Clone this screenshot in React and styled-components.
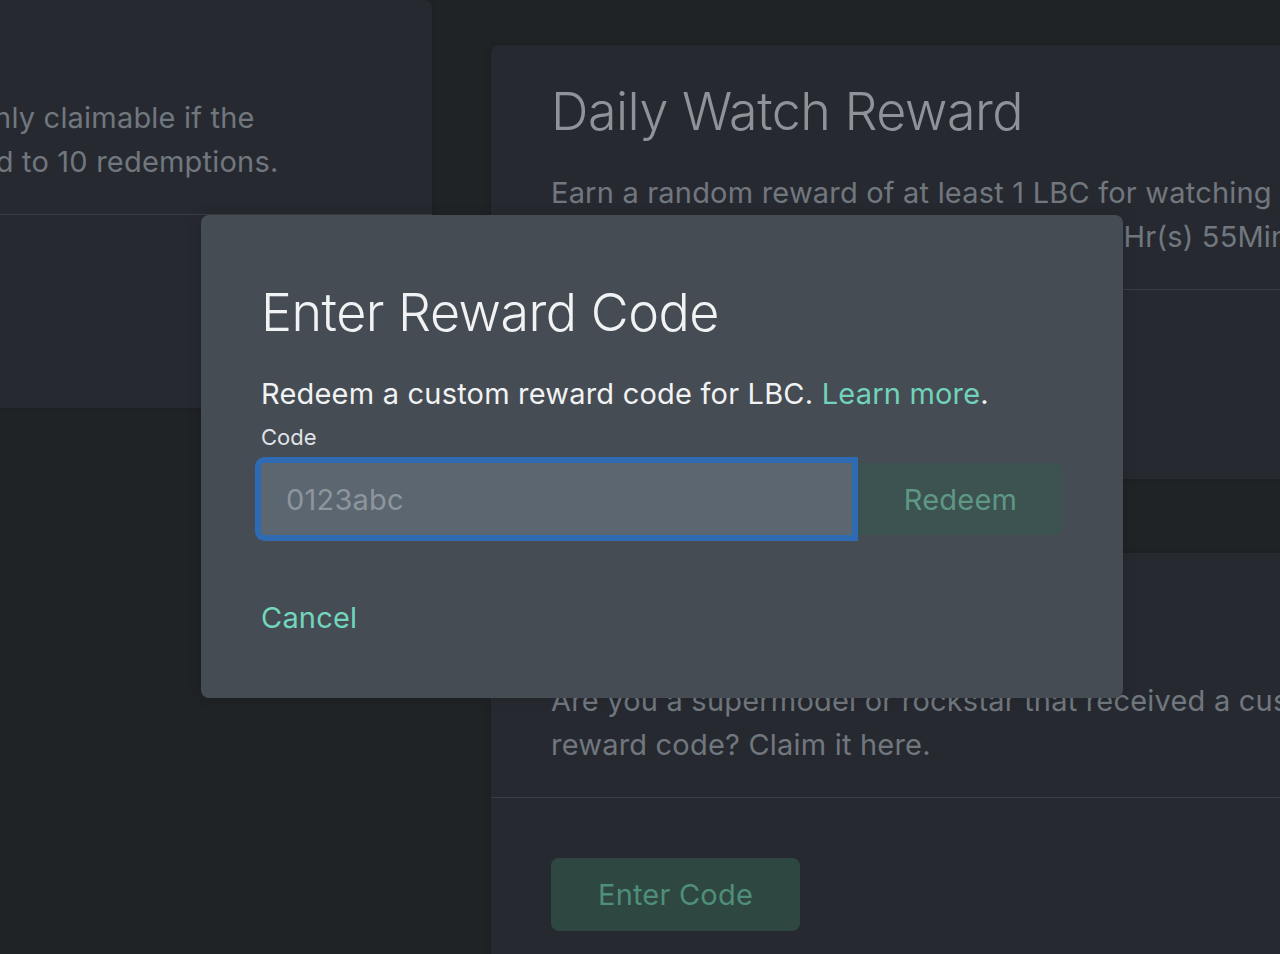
import styled, { createGlobalStyle } from 'styled-components';

const GlobalStyle = createGlobalStyle`
  html, body {
    margin: 0;
    padding: 0;
    background: #202326;
    font-family: Inter, "Noto Sans", sans-serif;
    overflow: hidden;
  }
`;

function App() {
  return (
    <>
      <GlobalStyle />
      <Page>
        <Columns>
          <LeftColumn>
            <Card>
              <Body $top={96}>
                <Description>
                  Rewards are only claimable if the<br />
                  but so is limited to 10 redemptions.
                </Description>
              </Body>
              <Divider />
              <Actions $bottom={60}>
                <GhostButton>Claim</GhostButton>
              </Actions>
            </Card>
          </LeftColumn>

          <RightColumn>
            <Card>
              <Body>
                <CardTitle>Daily Watch Reward</CardTitle>
                <Description>
                  Earn a random reward of at least 1 LBC for watching a cool video<br />
                  a cool video every day. Come back in 23 Hr(s) 55Min
                </Description>
              </Body>
              <Divider />
              <Actions>
                <GhostButton>Claim</GhostButton>
              </Actions>
            </Card>

            <Card>
              <Body>
                <CardTitle>Custom Code</CardTitle>
                <Description>
                  Are you a supermodel or rockstar that received a custom<br />
                  reward code? Claim it here.
                </Description>
              </Body>
              <Divider />
              <Actions>
                <GhostButton>Enter Code</GhostButton>
              </Actions>
            </Card>
          </RightColumn>
        </Columns>

        <Overlay>
          <Modal>
            <ModalTitle>Enter Reward Code</ModalTitle>
            <ModalText>
              Redeem a custom reward code for LBC. <Link href="#">Learn more</Link>.
            </ModalText>
            <Label htmlFor="code">Code</Label>
            <InputGroup>
              <CodeInput id="code" placeholder="0123abc" />
              <RedeemButton disabled>Redeem</RedeemButton>
            </InputGroup>
            <Footer>
              <TextButton>Cancel</TextButton>
            </Footer>
          </Modal>
        </Overlay>
      </Page>
    </>
  );
}

const Page = styled.div`
  position: relative;
  width: 1280px;
  height: 954px;
  overflow: hidden;
  background: #202326;
`;

const Columns = styled.main`
  display: flex;
  align-items: flex-start;
  gap: 59px;
  margin-left: -264px;
`;

const LeftColumn = styled.section`
  flex: 0 0 696px;
`;

const RightColumn = styled.section`
  flex: 0 0 900px;
  display: flex;
  flex-direction: column;
  gap: 74px;
  padding-top: 45px;
`;

const Card = styled.article`
  background: #262a30;
  border-radius: 8px;
  box-shadow: 0 0 6px rgba(0, 0, 0, 0.15);
`;

const Body = styled.div`
  padding: ${(p) => p.$top ?? 34}px 60px 30px;
  display: flex;
  flex-direction: column;
  gap: 26px;
`;

const CardTitle = styled.h2`
  margin: 0;
  font-size: 52px;
  line-height: 66px;
  font-weight: 300;
  letter-spacing: -0.5px;
  color: #8e9399;
  white-space: nowrap;
`;

const Description = styled.p`
  margin: 0;
  font-size: 29px;
  line-height: 44px;
  letter-spacing: 0.2px;
  color: #71777e;
  white-space: nowrap;
`;

const Divider = styled.hr`
  margin: 0;
  border: none;
  height: 1px;
  background: #3a3f46;
`;

const Actions = styled.div`
  padding: 60px 60px ${(p) => p.$bottom ?? 56}px;
  display: flex;
`;

const GhostButton = styled.button`
  height: 73px;
  padding: 0 47px;
  border: none;
  border-radius: 8px;
  background: #2e4741;
  color: #4f8e79;
  font-family: inherit;
  font-size: 29px;
  letter-spacing: 0.2px;
`;

const Overlay = styled.div`
  position: absolute;
  inset: 0;
  padding: 215px 0 0 201px;
`;

const Modal = styled.div`
  width: 922px;
  box-sizing: border-box;
  padding: 65px 60px 59px;
  background: #464c54;
  border-radius: 8px;
  box-shadow: 0 0 14px rgba(0, 0, 0, 0.12);
`;

const ModalTitle = styled.h1`
  margin: 0 0 27px;
  font-size: 52px;
  line-height: 66px;
  font-weight: 300;
  letter-spacing: -0.5px;
  color: #f1f2f3;
`;

const ModalText = styled.p`
  margin: 0 0 6px;
  font-size: 29px;
  line-height: 42px;
  letter-spacing: 0.2px;
  color: #f1f2f3;
`;

const Link = styled.a`
  color: #71d3ba;
  text-decoration: none;
`;

const Label = styled.label`
  display: block;
  font-size: 22px;
  line-height: 33px;
  color: #dfe2e5;
`;

const InputGroup = styled.div`
  display: flex;
  margin-top: 9px;
`;

const CodeInput = styled.input`
  flex: 1;
  min-width: 0;
  height: 72px;
  box-sizing: border-box;
  margin-right: 6px;
  padding: 0 25px;
  border: none;
  border-radius: 4px 0 0 4px;
  background: #5c6670;
  box-shadow: 0 0 0 6px #2e6bb2;
  outline: none;
  font-family: inherit;
  font-size: 29px;
  letter-spacing: 0.2px;
  color: #f1f2f3;

  &::placeholder {
    color: #8d959d;
  }
`;

const RedeemButton = styled.button`
  flex: 0 0 205px;
  height: 72px;
  border: none;
  border-radius: 0 8px 8px 0;
  background: #3d5351;
  color: #5e9885;
  font-family: inherit;
  font-size: 29px;
  letter-spacing: 0.2px;
`;

const Footer = styled.div`
  margin-top: 62px;
  display: flex;
`;

const TextButton = styled.button`
  padding: 0;
  border: none;
  background: none;
  font-family: inherit;
  font-size: 29px;
  line-height: 42px;
  letter-spacing: 0.2px;
  color: #71d6bc;
`;

export default App;
